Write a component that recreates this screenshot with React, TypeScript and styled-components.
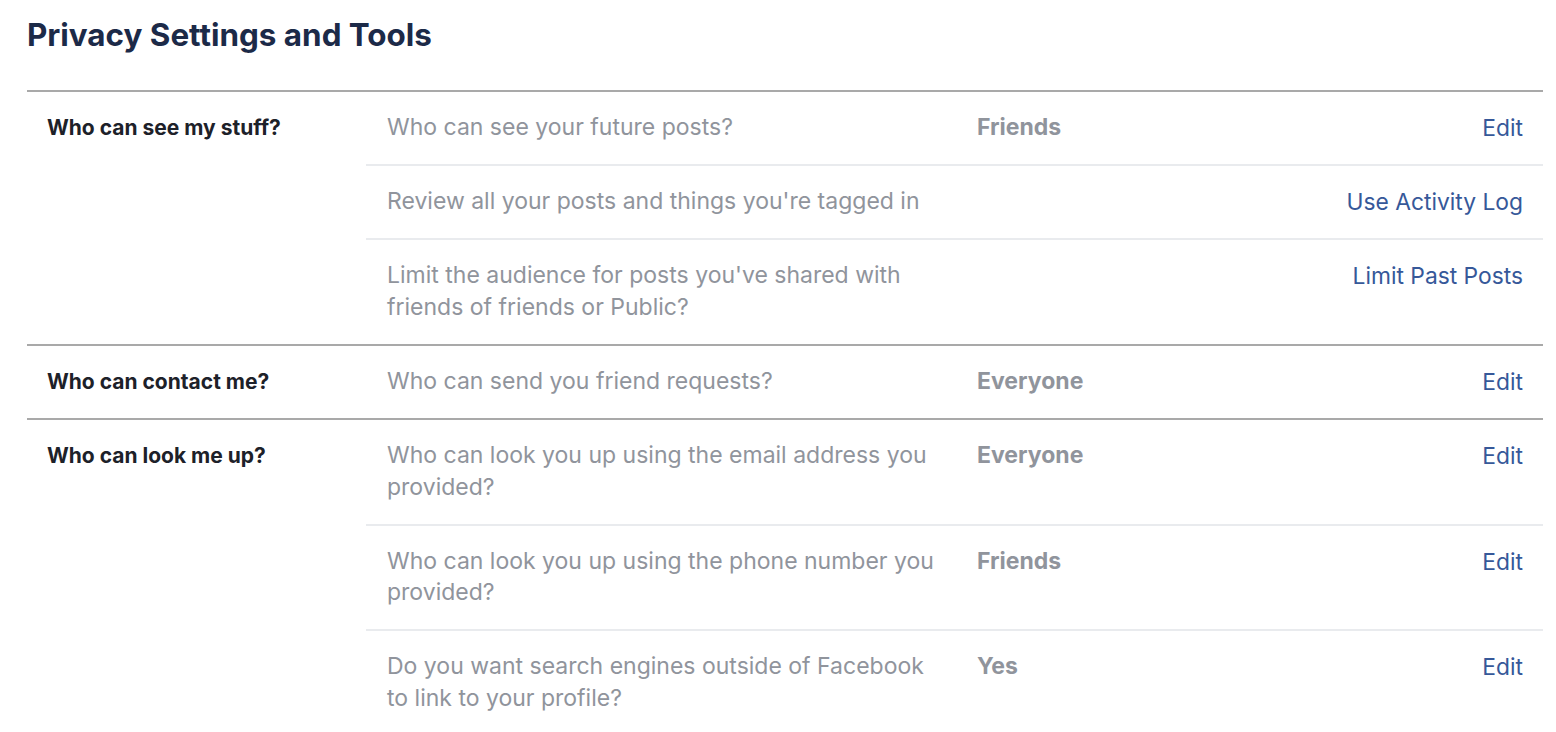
import React from "react";
import styled, { createGlobalStyle } from "styled-components";

const GlobalStyle = createGlobalStyle`
  body {
    margin: 0;
    background: #ffffff;
    font-family: Inter, "Liberation Sans", sans-serif;
  }
`;

const Page = styled.div`
  padding: 14px 13px 0 27px;
`;

const Title = styled.h1`
  margin: 0 0 34px;
  font-size: 31.4px;
  line-height: 42px;
  font-weight: 700;
  color: #1c2a48;
`;

const Section = styled.div`
  display: flex;
  border-top: 2px solid #a9a9a9;
`;

const SectionLabel = styled.div`
  width: 339px;
  flex-shrink: 0;
  padding: 20px 0 0 20px;
  box-sizing: border-box;
  font-size: 21px;
  line-height: 31.8px;
  font-weight: 700;
  color: #1d2129;
`;

const Rows = styled.div`
  flex: 1;
  display: flex;
  flex-direction: column;
`;

const Row = styled.div`
  display: flex;
  align-items: flex-start;
  padding: 20px 20px 20.2px 21px;
  border-top: 2px solid #e9ebee;

  &:first-child {
    border-top: none;
  }
`;

const Question = styled.div`
  width: 556px;
  margin-right: 34px;
  font-size: 23px;
  line-height: 31.8px;
  color: #90949c;
`;

const Value = styled.div`
  flex: 1;
  font-size: 23px;
  line-height: 31.8px;
  font-weight: 700;
  color: #90949c;
`;

const Action = styled.a`
  font-size: 22.8px;
  line-height: 31.8px;
  color: #365899;
  text-decoration: none;
  white-space: nowrap;
`;

type Item = { question: string; value?: string; action: string };
type Group = { label: string; items: Item[] };

const groups: Group[] = [
  {
    label: "Who can see my stuff?",
    items: [
      { question: "Who can see your future posts?", value: "Friends", action: "Edit" },
      { question: "Review all your posts and things you're tagged in", action: "Use Activity Log" },
      {
        question: "Limit the audience for posts you've shared with friends of friends or Public?",
        action: "Limit Past Posts",
      },
    ],
  },
  {
    label: "Who can contact me?",
    items: [{ question: "Who can send you friend requests?", value: "Everyone", action: "Edit" }],
  },
  {
    label: "Who can look me up?",
    items: [
      {
        question: "Who can look you up using the email address you provided?",
        value: "Everyone",
        action: "Edit",
      },
      {
        question: "Who can look you up using the phone number you provided?",
        value: "Friends",
        action: "Edit",
      },
      {
        question: "Do you want search engines outside of Facebook to link to your profile?",
        value: "Yes",
        action: "Edit",
      },
    ],
  },
];

export default function App() {
  return (
    <Page>
      <GlobalStyle />
      <Title>Privacy Settings and Tools</Title>
      {groups.map((g) => (
        <Section key={g.label}>
          <SectionLabel>{g.label}</SectionLabel>
          <Rows>
            {g.items.map((it) => (
              <Row key={it.question}>
                <Question>{it.question}</Question>
                <Value>{it.value}</Value>
                <Action href="#">{it.action}</Action>
              </Row>
            ))}
          </Rows>
        </Section>
      ))}
    </Page>
  );
}
